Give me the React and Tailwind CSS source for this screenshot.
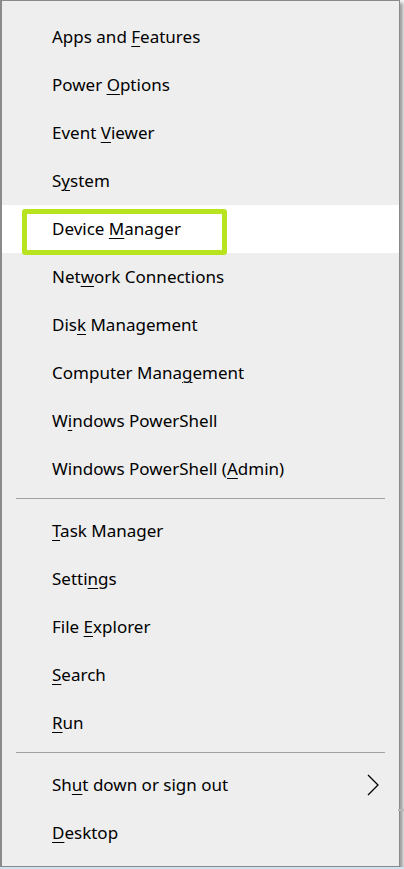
import React from "react";

const groups = [
  [
    ["Apps and ", "F", "eatures"],
    ["Power ", "O", "ptions"],
    ["Event ", "V", "iewer"],
    ["S", "y", "stem"],
    ["Device ", "M", "anager", true],
    ["Net", "w", "ork Connections"],
    ["Dis", "k", " Management"],
    ["Computer Mana", "g", "ement"],
    ["W", "i", "ndows PowerShell"],
    ["Windows PowerShell (", "A", "dmin)"],
  ],
  [
    ["", "T", "ask Manager"],
    ["Setti", "n", "gs"],
    ["File ", "E", "xplorer"],
    ["", "S", "earch"],
    ["", "R", "un"],
  ],
  [
    ["Sh", "u", "t down or sign out", false, true],
    ["", "D", "esktop"],
  ],
];

const Row = ({ item }) => {
  const [before, key, after, active, more] = item;
  return (
    <div
      className={`relative flex items-center h-[48px] pl-[50px] pr-[19px] ${
        active ? "bg-white" : ""
      }`}
    >
      <span className="flex-1 whitespace-nowrap">
        {before}
        <span className="underline decoration-1 underline-offset-[3px]">{key}</span>
        {after}
      </span>
      {more && (
        <svg width="12" height="22" viewBox="0 0 12 22" className="mr-[1px]">
          <polyline points="1,1 11,11 1,21" fill="none" stroke="#000" strokeWidth="1.3" />
        </svg>
      )}
      {active && (
        <div className="absolute left-[20px] top-[4px] w-[205px] h-[46px] border-[5px] border-[#b8e41f] rounded-[3px]" />
      )}
    </div>
  );
};

const App = () => {
  return (
    <div className="w-[404px] h-[869px] bg-[#f4f4f4] relative overflow-hidden">
      <div className="absolute left-0 top-[867px] w-[404px] h-[2px] bg-[#cfe3ef]" />
      <div className="absolute left-[398px] top-[809px] w-[6px] h-[2px] bg-[#b8b8b8]" />
      <div
        className="w-[400px] h-[867px] bg-[#eeeeee] border border-[#8a8a8a] border-l-2 shadow-[3px_3px_3px_rgba(0,0,0,0.35)] text-black text-[17px] pt-[12px] pb-[8px]"
        style={{ fontFamily: '"Noto Sans", "Open Sans", sans-serif' }}
      >
        {groups.map((g, gi) => (
          <div key={gi}>
            {gi > 0 && (
              <div className="mt-[5px] mb-[8px] mx-[14px] h-[1px] bg-[#a2a2a2]" />
            )}
            {g.map((item, i) => (
              <Row key={i} item={item} />
            ))}
          </div>
        ))}
      </div>
    </div>
  );
};

export default App;
